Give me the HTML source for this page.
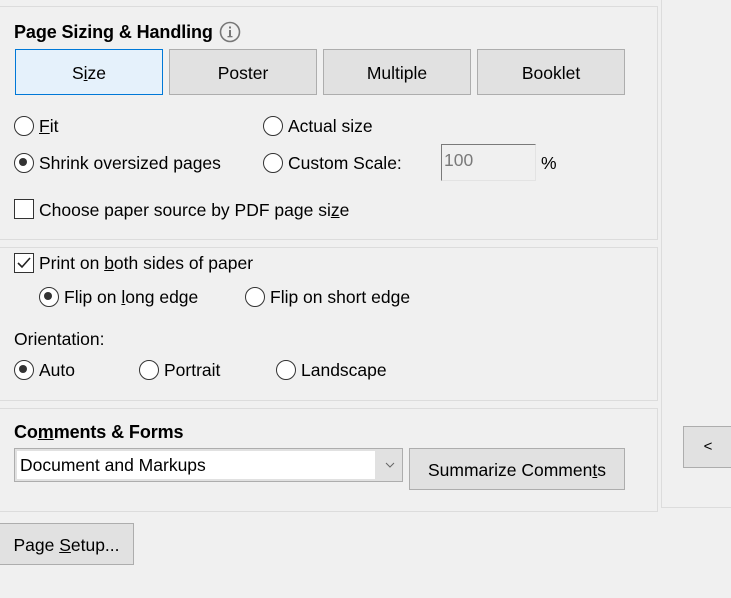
<!DOCTYPE html>
<html><head><style>
body{margin:0;width:731px;height:598px;background:#f0f0f0;font-family:"Liberation Sans",sans-serif;font-size:16px;color:#000;position:relative;overflow:hidden}
.a{position:absolute}
.g{position:absolute;border:1px solid #dcdcdc;left:-2px;width:658px}
.btn{position:absolute;border:1px solid #adadad;background:#e1e1e1;text-align:center;box-sizing:border-box}
.r{position:absolute;width:18px;height:18px;border:1px solid #333;border-radius:50%;background:#fff;box-sizing:border-box}
.r.on::after{content:"";position:absolute;left:4px;top:4px;width:8px;height:8px;border-radius:50%;background:#333}
.t{position:absolute;white-space:nowrap;font-size:17.5px;line-height:20px}
.h{position:absolute;font-weight:bold;font-size:18px;letter-spacing:-0.1px}
</style></head><body>
<div class="g" style="top:6px;height:232px"></div>
<div class="g" style="top:247px;height:152px"></div>
<div class="g" style="top:408px;height:102px"></div>
<div class="a" style="left:661px;top:0;width:80px;height:507px;border-left:1px solid #dcdcdc;border-bottom:1px solid #dcdcdc"></div>

<div class="h" style="left:14px;top:22px">Page Sizing &amp; Handling</div>
<svg class="a" style="left:219px;top:21px" width="22" height="22"><circle cx="11" cy="11" r="9.5" fill="none" stroke="#777" stroke-width="1.6"/><rect x="10" y="9" width="2" height="7" fill="#777"/><rect x="10" y="5.5" width="2" height="2" fill="#777"/><rect x="8.5" y="15" width="5" height="1.3" fill="#777"/></svg>

<div class="btn" style="left:15px;top:49px;width:148px;height:46px;background:#e5f1fb;border-color:#0078d7;line-height:46px;font-size:17.5px">S<u>i</u>ze</div>
<div class="btn" style="left:169px;top:49px;width:148px;height:46px;line-height:46px;font-size:17.5px">Poster</div>
<div class="btn" style="left:323px;top:49px;width:148px;height:46px;line-height:46px;font-size:17.5px">Multiple</div>
<div class="btn" style="left:477px;top:49px;width:148px;height:46px;line-height:46px;font-size:17.5px">Booklet</div>

<div class="r" style="left:14px;top:116px;width:20px;height:20px"></div><div class="t" style="left:39px;top:116px"><u>F</u>it</div>
<div class="r" style="left:263px;top:116px;width:20px;height:20px"></div><div class="t" style="left:288px;top:116px">Actual size</div>
<div class="r on" style="left:14px;top:153px;width:20px;height:20px"></div><div class="t" style="left:39px;top:153px">Shrink oversized pages</div>
<div class="r" style="left:263px;top:153px;width:20px;height:20px"></div><div class="t" style="left:288px;top:153px">Custom Scale:</div>
<div class="a" style="left:441px;top:144px;width:95px;height:37px;border:1px solid #7a7a7a;border-right-color:#e3e3e3;border-bottom-color:#e3e3e3;color:#7a7a7a;font-size:17.5px;padding-left:2px;box-sizing:border-box;line-height:30px">100</div>
<div class="t" style="left:541px;top:153px">%</div>
<div class="a" style="left:14px;top:199px;width:20px;height:20px;border:1px solid #333;background:#fff;box-sizing:border-box"></div>
<div class="t" style="left:39px;top:200px">Choose paper source by PDF page si<u>z</u>e</div>

<div class="a" style="left:14px;top:253px;width:20px;height:20px;border:1px solid #333;background:#fff;box-sizing:border-box"><svg width="18" height="18" style="position:absolute;left:0;top:0"><path d="M3 9 L7 13 L15 4" fill="none" stroke="#222" stroke-width="1.6"/></svg></div>
<div class="t" style="left:39px;top:253px">Print on <u>b</u>oth sides of paper</div>
<div class="r on" style="left:39px;top:287px;width:20px;height:20px"></div><div class="t" style="left:64px;top:287px">Flip on <u>l</u>ong edge</div>
<div class="r" style="left:245px;top:287px;width:20px;height:20px"></div><div class="t" style="left:270px;top:287px">Flip on short edge</div>
<div class="t" style="left:14px;top:329px">Orientation:</div>
<div class="r on" style="left:14px;top:360px;width:20px;height:20px"></div><div class="t" style="left:39px;top:360px">Auto</div>
<div class="r" style="left:139px;top:360px;width:20px;height:20px"></div><div class="t" style="left:164px;top:360px">Portrait</div>
<div class="r" style="left:276px;top:360px;width:20px;height:20px"></div><div class="t" style="left:301px;top:360px">Landscape</div>

<div class="h" style="left:14px;top:422px">Co<u>m</u>ments &amp; Forms</div>
<div class="a" style="left:14px;top:448px;width:389px;height:34px;border:1px solid #adadad;background:#e1e1e1;box-sizing:border-box"><div class="a" style="left:2px;top:2px;width:358px;height:28px;background:#fff"></div><div class="t" style="left:5px;top:6px">Document and Markups</div><svg class="a" style="left:370px;top:12px" width="10" height="8"><path d="M1 2 L5 6 L9 2" fill="none" stroke="#666" stroke-width="1"/></svg></div>
<div class="btn" style="left:409px;top:448px;width:216px;height:42px;line-height:42px;font-size:17.5px">Summarize Commen<u>t</u>s</div>
<div class="btn" style="left:683px;top:426px;width:50px;height:42px;line-height:40px;font-size:15px">&lt;</div>
<div class="btn" style="left:-1px;top:523px;width:135px;height:42px;line-height:42px;font-size:17.5px">Page <u>S</u>etup...</div>
</body></html>
